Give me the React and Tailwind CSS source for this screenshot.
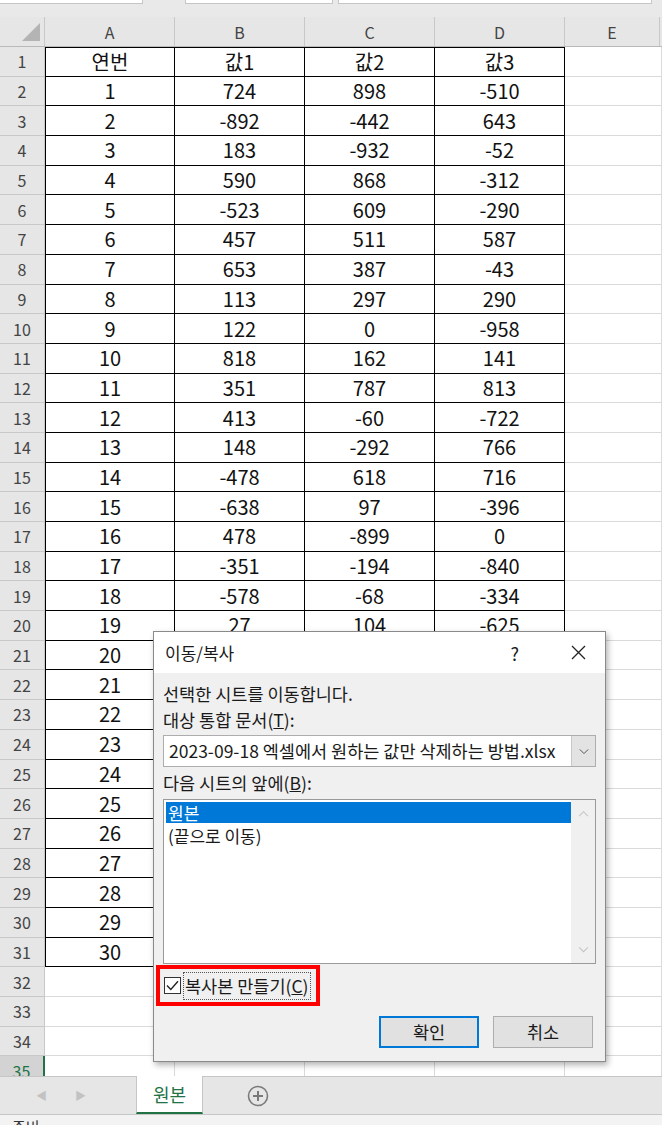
import React from 'react';

const data = [
  ['연번', '값1', '값2', '값3'],
  ['1', '724', '898', '-510'],
  ['2', '-892', '-442', '643'],
  ['3', '183', '-932', '-52'],
  ['4', '590', '868', '-312'],
  ['5', '-523', '609', '-290'],
  ['6', '457', '511', '587'],
  ['7', '653', '387', '-43'],
  ['8', '113', '297', '290'],
  ['9', '122', '0', '-958'],
  ['10', '818', '162', '141'],
  ['11', '351', '787', '813'],
  ['12', '413', '-60', '-722'],
  ['13', '148', '-292', '766'],
  ['14', '-478', '618', '716'],
  ['15', '-638', '97', '-396'],
  ['16', '478', '-899', '0'],
  ['17', '-351', '-194', '-840'],
  ['18', '-578', '-68', '-334'],
  ['19', '27', '104', '-625'],
];
for (let n = 20; n <= 30; n++) data.push([String(n), '', '', '']);

const Chevron = ({ up, className }) => (
  <svg viewBox="0 0 12 8" className={className} fill="none" stroke="currentColor" strokeWidth="1.2">
    {up ? <path d="M1 7 L6 2 L11 7" /> : <path d="M1 1.5 L6 6.5 L11 1.5" />}
  </svg>
);

const Row = ({ r }) => {
  const inTable = r <= 31;
  const active = r === 35;
  const cells = inTable ? data[r - 1] : ['', '', '', ''];
  return (
    <div className="flex h-[29.7px] shrink-0">
      <div
        className={
          'w-[45px] shrink-0 flex items-center justify-center text-[16px] border-r border-b border-[#c8c8c8] ' +
          (active ? 'bg-[#d3d3d3] text-[#217346] border-r-[#217346] border-r-2' : 'bg-[#e6e6e6] text-[#444]')
        }
      >
        {r}
      </div>
      {cells.map((v, i) => (
        <div
          key={i}
          className={
            'w-[130px] shrink-0 flex items-center justify-center text-[20px] text-[#111] border-r border-b ' +
            (inTable ? 'border-black ' : 'border-[#dadada] ') +
            (inTable && i === 0 ? 'border-l ' : '') +
            (r === 1 ? 'border-t border-t-black' : '')
          }
        >
          {v}
        </div>
      ))}
      <div className="flex-1 border-r border-b border-[#dadada]" />
    </div>
  );
};

export default function App() {
  const rowNums = Array.from({ length: 35 }, (_, i) => i + 1);
  return (
    <div className="relative w-[662px] h-[1125px] overflow-hidden bg-white font-['Noto_Sans_CJK_KR','Noto_Sans',sans-serif] leading-none">
      {/* formula bar remnant */}
      <div className="h-[17px] bg-[#e9e9e9] flex">
        <div className="w-[143px] h-[4px] bg-white border-r border-b border-[#c6c6c6]" />
        <div className="ml-[42px] w-[148px] h-[4px] bg-white border-x border-b border-[#c6c6c6]" />
        <div className="ml-[5px] w-[314px] h-[4px] bg-white border-x border-b border-[#c6c6c6]" />
      </div>

      {/* column headers */}
      <div className="flex h-[30px] bg-[#e6e6e6] border-b border-[#b9b9b9] text-[#444] text-[16px]">
        <div className="relative w-[45px] shrink-0 border-r border-[#c8c8c8]">
          <svg className="absolute left-[22px] top-[6px]" width="18" height="18" viewBox="0 0 18 18">
            <polygon points="18,0 18,18 0,18" fill="#b4b4b4" />
          </svg>
        </div>
        {['A', 'B', 'C', 'D'].map((c) => (
          <div key={c} className="w-[130px] shrink-0 flex items-center justify-center border-r border-[#c8c8c8]">
            {c}
          </div>
        ))}
        <div className="w-[95px] flex items-center justify-center border-r border-[#c8c8c8]">E</div>
      </div>

      {/* grid */}
      <div className="h-[1029px] overflow-hidden flex flex-col">
        {rowNums.map((r) => (
          <Row key={r} r={r} />
        ))}
      </div>

      {/* sheet tabs */}
      <div className="h-[39px] bg-[#e6e6e6] border-t border-[#c6c6c6] border-b flex items-stretch">
        <div className="w-[136px] flex items-center">
          <span className="ml-[36px] text-[#c2c2c2] text-[11px]">◀</span>
          <span className="ml-[28px] text-[#c2c2c2] text-[11px]">▶</span>
        </div>
        <div className="w-[67px] -mt-px bg-white border-x border-[#c6c6c6] border-b-2 border-b-[#217346] flex items-center justify-center text-[18px] text-[#217346]">
          원본
        </div>
        <div className="ml-[44px] flex items-center">
          <svg width="22" height="22" viewBox="0 0 22 22" fill="none" stroke="#7a7a7a" strokeWidth="1.6">
            <circle cx="11" cy="11" r="9.5" />
            <path d="M11 6 V16 M6 11 H16" strokeWidth="2" />
          </svg>
        </div>
      </div>
      <div className="h-[11px] bg-[#f3f3f3] overflow-hidden">
        <div className="ml-[12px] mt-[4px] text-[15px] text-[#333]">준비</div>
      </div>

      {/* move/copy dialog */}
      <div className="absolute left-[153px] top-[631px] w-[453px] h-[431px] bg-[#f0f0f0] border border-[#8a8a8a] shadow-[2px_3px_6px_rgba(0,0,0,0.3)] flex flex-col text-[17.5px] text-[#1a1a1a]">
        <div className="h-[41px] bg-white flex items-center shrink-0">
          <span className="ml-[11px] text-[17px]">이동/복사</span>
          <span className="ml-auto mr-[52px] text-[18px]">?</span>
          <svg className="mr-[19px]" width="15" height="15" viewBox="0 0 15 15" stroke="#222" strokeWidth="1.3">
            <path d="M1 1 L14 14 M14 1 L1 14" />
          </svg>
        </div>
        <div className="px-[9px] flex flex-col">
          <div className="mt-[8px] h-[26px] flex items-center">선택한 시트를 이동합니다.</div>
          <div className="h-[26px] flex items-center">
            대상 통합 문서(<span className="underline">T</span>):
          </div>
          <div className="mt-[2px] h-[32px] bg-white border border-[#adadad] flex items-stretch">
            <div className="flex-1 flex items-center pl-[5px] whitespace-nowrap overflow-hidden">
              2023-09-18 엑셀에서 원하는 값만 삭제하는 방법.xlsx
            </div>
            <div className="w-[24px] bg-[#e3e3e3] border-l border-[#c8c8c8] flex items-center justify-center text-[#555]">
              <Chevron className="w-[10px] h-[7px]" />
            </div>
          </div>
          <div className="mt-[3px] h-[26px] flex items-center">
            다음 시트의 앞에(<span className="underline">B</span>):
          </div>
          <div className="mt-[3px] h-[165px] bg-white border border-[#9a9a9a] flex">
            <div className="flex-1 pt-[2px] pl-[2px] text-[17px]">
              <div className="h-[21px] bg-[#0078d7] text-white flex items-center pl-[2px]">원본</div>
              <div className="h-[22px] flex items-center pl-[2px] mt-[1px]">(끝으로 이동)</div>
            </div>
            <div className="w-[24px] bg-[#f0f0f0] flex flex-col items-center justify-between py-[10px] text-[#c4c4c4]">
              <Chevron up className="w-[11px] h-[7px]" />
              <Chevron className="w-[11px] h-[7px]" />
            </div>
          </div>
          <div className="mt-[1px] -ml-[7px] w-[164px] h-[41px] border-[4px] border-[#ff0000] flex items-center pl-[4px]">
            <div className="w-[17px] h-[17px] shrink-0 border border-[#333] bg-white flex items-center justify-center">
              <svg width="13" height="11" viewBox="0 0 13 11" fill="none" stroke="#222" strokeWidth="1.4">
                <path d="M1 5.5 L4.8 9.5 L12 1.2" />
              </svg>
            </div>
            <div className="ml-[2px] h-[28px] px-[1px] border border-dotted border-[#555] flex items-center whitespace-nowrap">
              복사본 만들기(<span className="underline">C</span>)
            </div>
          </div>
          <div className="mt-[10px] flex justify-end gap-[14px] pr-[3px]">
            <div className="w-[100px] h-[32px] bg-[#e1e1e1] border-2 border-[#0078d7] flex items-center justify-center">확인</div>
            <div className="w-[100px] h-[32px] bg-[#e1e1e1] border border-[#adadad] flex items-center justify-center">취소</div>
          </div>
        </div>
      </div>
    </div>
  );
}
